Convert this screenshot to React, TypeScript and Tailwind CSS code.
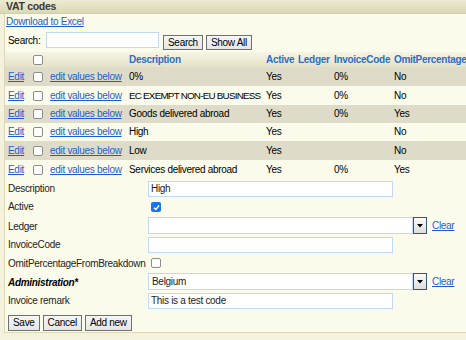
import React from "react";

function Box({ checked }: { checked?: boolean }) {
  return checked ? (
    <span className="inline-flex w-[10px] h-[10px] rounded-[2px] bg-[#1a73e8] items-center justify-center">
      <svg viewBox="0 0 10 10" className="w-[9px] h-[9px]">
        <path d="M2.2 5.2 L4.2 7.2 L7.9 2.8" stroke="white" strokeWidth="1.6" fill="none" />
      </svg>
    </span>
  ) : (
    <span className="inline-block w-[10px] h-[10px] rounded-[2px] border border-[#8c8c8c] bg-white" />
  );
}

function Btn({ children, className = "" }: { children: React.ReactNode; className?: string }) {
  return (
    <span
      className={
        "inline-flex items-center justify-center px-[4px] border border-[#707070] bg-gradient-to-b from-[#f6f6f6] to-[#e6e6e6] text-black leading-[12px] " +
        className
      }
    >
      {children}
    </span>
  );
}

function Select({ value }: { value?: string }) {
  return (
    <div className="flex items-center">
      <div className="w-[265px] h-[17px] bg-white border border-[#c3d8f5] pl-[3px] leading-[15px]">{value}</div>
      <div className="w-[14px] h-[17px] border border-[#35577a] bg-gradient-to-b from-[#fafafa] to-[#dedede] flex items-center justify-center">
        <svg viewBox="0 0 6 4" className="w-[6px] h-[4px]">
          <path d="M0 0 L6 0 L3 3.5 Z" fill="black" />
        </svg>
      </div>
      <span className="ml-[5px] text-[#1b5fcf] underline">Clear</span>
    </div>
  );
}

function Input({ value }: { value?: string }) {
  return <div className="w-[245px] h-[16px] bg-white border border-[#c3d8f5] pl-[2px] leading-[14px]">{value}</div>;
}

const rows = [
  { d: "0%", ic: "0%", o: "No", h: "h-[19px]", g: true },
  { d: "EC EXEMPT NON-EU BUSINESS", ic: "0%", o: "No", h: "h-[19px]", g: false },
  { d: "Goods delivered abroad", ic: "0%", o: "Yes", h: "h-[18px]", g: true },
  { d: "High", ic: "", o: "No", h: "h-[18px]", g: false },
  { d: "Low", ic: "", o: "No", h: "h-[19px]", g: true },
  { d: "Services delivered abroad", ic: "0%", o: "Yes", h: "h-[20px]", g: false },
];

const grid = "grid grid-cols-[28px_17px_79px_137px_32px_36px_60px_120px] items-center whitespace-nowrap";

export default function App() {
  return (
    <div className="w-[466px] h-[340px] overflow-hidden bg-[#f4f2dc] font-['Liberation_Sans',Arial,sans-serif] text-[10px] tracking-[-0.3px] text-black leading-[12px]">
      <div className="h-[14px] bg-gradient-to-b from-[#ecead2] to-[#dbd8b4] border-b border-[#d2cea8] pl-[6px] font-bold text-[#3a3a3a] text-[10.5px] leading-[13px]">
        VAT codes
      </div>
      <div className="ml-[4px] border-l border-b border-[#dcd9b8] bg-[#fbfbec] h-[319px] overflow-hidden">
        <div className="mt-[1px] h-[13px] pl-[1px] leading-[13px]">
          <span className="text-[#1b5fcf] underline">Download to Excel</span>
        </div>
        <div className="mt-[4px] h-[17px] flex items-start">
          <span className="ml-[3px] mt-[3px] w-[38px]">Search:</span>
          <div className="w-[113px] h-[16px] bg-white border border-[#c3d8f5]" />
          <Btn className="ml-[4px] mt-[3px] h-[15px]">Search</Btn>
          <Btn className="ml-[3px] mt-[3px] h-[15px]">Show All</Btn>
        </div>
        <div className="mt-[3px]">
          <div className={grid + " h-[15px] bg-gradient-to-b from-[#f6f5e4] to-[#e4e2c8] font-bold text-[#2e6dc4]"}>
            <span />
            <span className="flex">
              <Box />
            </span>
            <span />
            <span>Description</span>
            <span>Active</span>
            <span>Ledger</span>
            <span>InvoiceCode</span>
            <span>OmitPercentageFromBreakdown</span>
          </div>
          {rows.map((r, i) => (
            <div key={i} className={grid + " " + r.h + " " + (r.g ? "bg-[#dedcc8]" : "")}>
              <span className="pl-[3px] text-[#1b5fcf] underline">Edit</span>
              <span className="flex">
                <Box />
              </span>
              <span className="text-[#1b5fcf] underline">edit values below</span>
              <span className={r.d.startsWith("EC") ? "text-[9.8px] tracking-[-0.75px]" : ""}>{r.d}</span>
              <span>Yes</span>
              <span />
              <span>{r.ic}</span>
              <span>{r.o}</span>
            </div>
          ))}
        </div>
        <div className="flex flex-col text-[#222]">
          <div className="h-[18px] flex items-center">
            <span className="w-[143px] pl-[3px]">Description</span>
            <Input value="High" />
          </div>
          <div className="h-[18px] flex items-center">
            <span className="w-[146px] pl-[3px]">Active</span>
            <Box checked />
          </div>
          <div className="h-[19px] flex items-center">
            <span className="w-[143px] pl-[3px] mt-[2px]">Ledger</span>
            <Select />
          </div>
          <div className="h-[19px] flex items-center">
            <span className="w-[143px] pl-[3px]">InvoiceCode</span>
            <Input />
          </div>
          <div className="h-[18px] flex items-center">
            <span className="w-[146px] pl-[3px] mt-[2px]">OmitPercentageFromBreakdown</span>
            <Box />
          </div>
          <div className="h-[19px] flex items-center">
            <span className="w-[143px] pl-[3px] mt-[2px] font-bold italic text-black">Administration*</span>
            <Select value="Belgium" />
          </div>
          <div className="h-[20px] flex items-center">
            <span className="w-[143px] pl-[3px]">Invoice remark</span>
            <Input value="This is a test code" />
          </div>
          <div className="mt-[4px] flex gap-[3px] pl-[3px]">
            <Btn className="h-[16px]">Save</Btn>
            <Btn className="h-[16px]">Cancel</Btn>
            <Btn className="h-[16px]">Add new</Btn>
          </div>
        </div>
      </div>
    </div>
  );
}
